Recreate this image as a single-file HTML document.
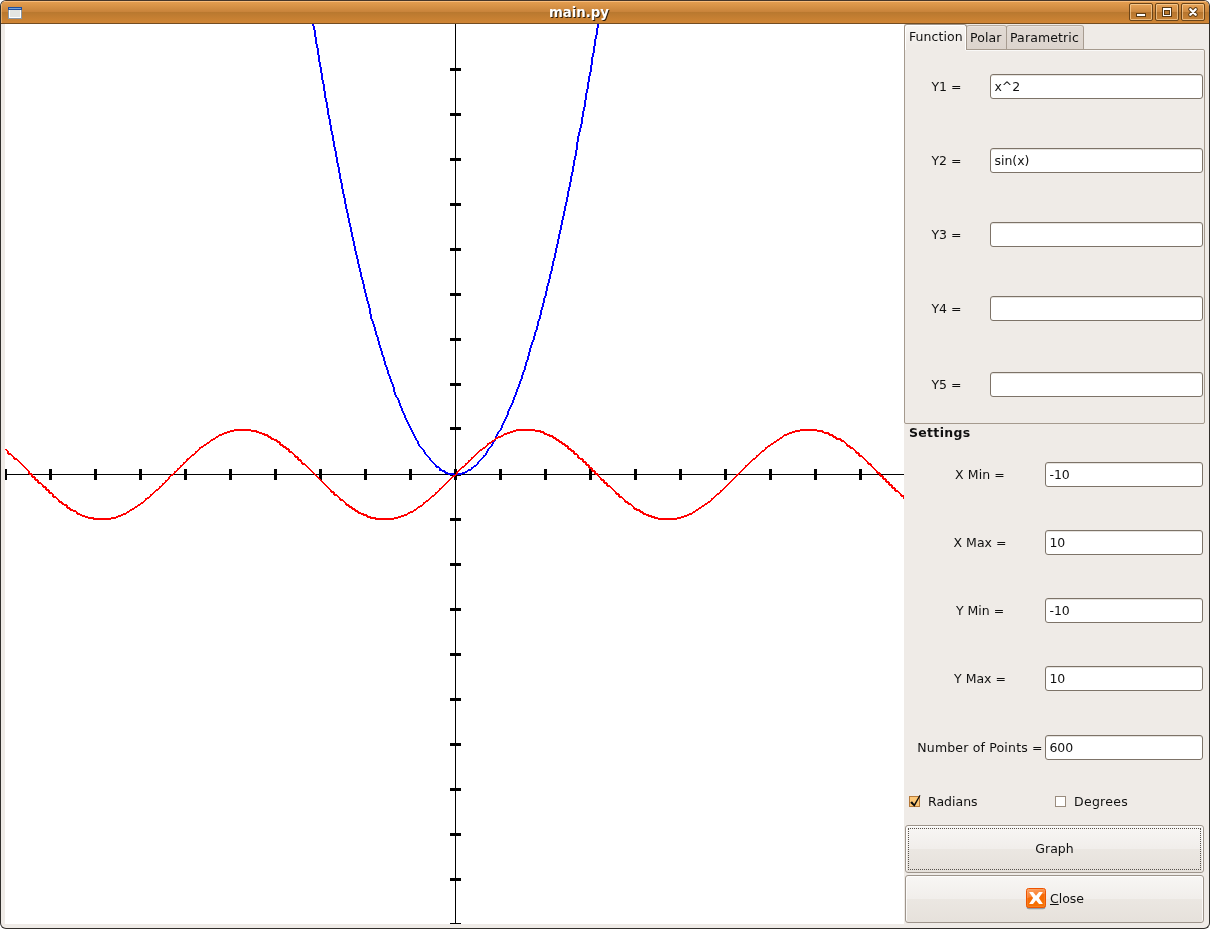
<!DOCTYPE html>
<html><head><meta charset="utf-8"><title>main.py</title>
<style>
html,body{margin:0;padding:0;}
body{width:1210px;height:929px;overflow:hidden;background:#fff;font-family:"DejaVu Sans","Liberation Sans",sans-serif;font-size:12.5px;color:#101010;}
#win{position:absolute;left:0;top:0;width:1210px;height:929px;box-sizing:border-box;border:1px solid #302e2b;border-top-color:#45362a;border-radius:6px 6px 6px 6px;background:#efebe7;overflow:hidden;}
#in{position:absolute;left:-1px;top:-1px;width:1210px;height:929px;will-change:transform;}
#tb{position:absolute;left:0;top:0;width:1210px;height:24px;
 background:linear-gradient(to bottom,#45362a 0,#45362a 1px,#f8bc7b 1px,#f8bc7b 2px,#e39d4f 2px,#c8833a 12px,#b8782f 12px,#d08535 23px,#734d22 23px,#734d22 24px);}
#tbl{position:absolute;left:1px;top:2px;width:1px;height:21px;background:rgba(255,210,150,.55);}
#title{position:absolute;left:0;top:1px;width:1158px;text-align:center;font-weight:bold;font-size:13.3px;line-height:24px;color:#fff;text-shadow:1px 1px 0 #2e1e0c;}
.abs{position:absolute;white-space:nowrap;line-height:16px;}
.c{text-align:center;}
#canvas{position:absolute;left:5px;top:24px;width:899px;height:900px;background:#fff;}
#canvas svg{display:block;}
.entry{position:absolute;box-sizing:border-box;height:25px;border:1px solid #7d7368;border-radius:3px;background:#fff;padding:0 0 0 3.4px;line-height:23px;white-space:nowrap;box-shadow:inset 0 1px 0 #e6e3df;}
.tab{position:absolute;box-sizing:border-box;border:1px solid #a79c91;border-top-color:#b5aa9e;border-bottom:none;border-radius:3px 3px 0 0;background:linear-gradient(to bottom,#e1dad4,#dcd4cd);box-shadow:inset 0 1px 0 #e9e4df;}
#nb{position:absolute;left:904px;top:49px;width:301px;height:375px;box-sizing:border-box;border:1px solid #a59a8e;border-radius:0 2px 2px 2px;background:#efebe7;box-shadow:inset 0 1px 0 #faf9f8;}
.btn{position:absolute;box-sizing:border-box;border:1px solid #9d948b;border-radius:3px;background:linear-gradient(to bottom,#f8f6f4 0,#f1eeeb 49%,#ebe7e2 50%,#e6e1db 100%);box-shadow:inset 1px 1px 0 rgba(255,255,255,.75),inset -1px 0 0 rgba(255,255,255,.75);text-align:center;}
.chk{position:absolute;box-sizing:border-box;width:11px;height:11px;border:1px solid #9a8c7e;background:#fff;}
.wb{position:absolute;top:3px;width:24px;height:18px;box-sizing:border-box;border:1px solid #6b4418;border-radius:2px;box-shadow:inset 0 0 0 1px rgba(255,220,170,.6);
 background:linear-gradient(to bottom,#e8a458 0,#cc8840 50%,#b5752e 50%,#c98336 100%);}
.wb svg{position:absolute;left:-1px;top:-1px;}
</style></head><body>
<div id="win"><div id="in">
 <div id="tb"></div><div id="tbl"></div>
 <svg class="abs" style="left:8px;top:7px;" width="14" height="12" viewBox="0 0 14 12" shape-rendering="crispEdges">
  <rect x="0" y="0" width="14" height="12" fill="#8b97a3"/>
  <rect x="0" y="0" width="14" height="3" fill="#1d4d9d"/>
  <rect x="1" y="1" width="12" height="1" fill="#78a3d8"/>
  <rect x="1" y="3" width="12" height="8" fill="#ffffff"/>
  <rect x="2" y="3" width="10" height="7" fill="#e3e5e1"/>
 </svg>
 <div id="title">main.py</div>
 <div class="wb" style="left:1129px;"><svg width="24" height="18" viewBox="0 0 24 18" shape-rendering="crispEdges"><rect x="7" y="10" width="10" height="4" fill="#5a3a14"/><rect x="8" y="11" width="8" height="2" fill="#fff"/></svg></div>
 <div class="wb" style="left:1155px;"><svg width="24" height="18" viewBox="0 0 24 18" shape-rendering="crispEdges"><rect x="7" y="4" width="10" height="10" fill="#5a3a14"/><rect x="8" y="5" width="8" height="8" fill="#fff"/><rect x="9" y="7" width="6" height="5" fill="#5a3a14"/><rect x="10" y="8" width="4" height="3" fill="#b8782f"/></svg></div>
 <div class="wb" style="left:1181px;"><svg width="24" height="18" viewBox="0 0 24 18"><path d="M9.3 6.3 L14.7 11.7 M14.7 6.3 L9.3 11.7" stroke="#5a3a14" stroke-width="4.2" stroke-linecap="round"/><path d="M9.3 6.3 L14.7 11.7 M14.7 6.3 L9.3 11.7" stroke="#fff" stroke-width="2.3" stroke-linecap="round"/></svg></div>

 <div id="canvas"><svg id="graph" width="899" height="900" viewBox="0 0 899 900" shape-rendering="crispEdges"><rect width="899" height="900" fill="#fff"/><rect x="0" y="450" width="899" height="1" fill="#000"/><rect x="450" y="0" width="1" height="900" fill="#000"/><rect x="-1" y="445" width="3" height="11" fill="#000"/><rect x="44" y="445" width="3" height="11" fill="#000"/><rect x="445" y="44" width="11" height="3" fill="#000"/><rect x="89" y="445" width="3" height="11" fill="#000"/><rect x="445" y="89" width="11" height="3" fill="#000"/><rect x="134" y="445" width="3" height="11" fill="#000"/><rect x="445" y="134" width="11" height="3" fill="#000"/><rect x="179" y="445" width="3" height="11" fill="#000"/><rect x="445" y="179" width="11" height="3" fill="#000"/><rect x="224" y="445" width="3" height="11" fill="#000"/><rect x="445" y="224" width="11" height="3" fill="#000"/><rect x="269" y="445" width="3" height="11" fill="#000"/><rect x="445" y="269" width="11" height="3" fill="#000"/><rect x="314" y="445" width="3" height="11" fill="#000"/><rect x="445" y="314" width="11" height="3" fill="#000"/><rect x="359" y="445" width="3" height="11" fill="#000"/><rect x="445" y="359" width="11" height="3" fill="#000"/><rect x="404" y="445" width="3" height="11" fill="#000"/><rect x="445" y="403" width="11" height="3" fill="#000"/><rect x="449" y="445" width="3" height="11" fill="#000"/><rect x="445" y="449" width="11" height="3" fill="#000"/><rect x="494" y="445" width="3" height="11" fill="#000"/><rect x="445" y="494" width="11" height="3" fill="#000"/><rect x="539" y="445" width="3" height="11" fill="#000"/><rect x="445" y="539" width="11" height="3" fill="#000"/><rect x="584" y="445" width="3" height="11" fill="#000"/><rect x="445" y="584" width="11" height="3" fill="#000"/><rect x="629" y="445" width="3" height="11" fill="#000"/><rect x="445" y="629" width="11" height="3" fill="#000"/><rect x="674" y="445" width="3" height="11" fill="#000"/><rect x="445" y="674" width="11" height="3" fill="#000"/><rect x="719" y="445" width="3" height="11" fill="#000"/><rect x="445" y="719" width="11" height="3" fill="#000"/><rect x="764" y="445" width="3" height="11" fill="#000"/><rect x="445" y="764" width="11" height="3" fill="#000"/><rect x="809" y="445" width="3" height="11" fill="#000"/><rect x="445" y="809" width="11" height="3" fill="#000"/><rect x="854" y="445" width="3" height="11" fill="#000"/><rect x="445" y="854" width="11" height="3" fill="#000"/><rect x="899" y="445" width="3" height="11" fill="#000"/><rect x="445" y="899" width="11" height="3" fill="#000"/><path fill="#0000ff" d="M307 0h2v1h-2zM592 0h2v1h-2zM307 1h2v1h-2zM592 1h2v1h-2zM308 2h2v1h-2zM592 2h2v1h-2zM308 3h2v1h-2zM592 3h2v1h-2zM308 4h2v1h-2zM591 4h2v1h-2zM308 5h2v1h-2zM591 5h2v1h-2zM309 6h2v1h-2zM591 6h2v1h-2zM309 7h2v1h-2zM591 7h2v1h-2zM309 8h2v1h-2zM591 8h2v1h-2zM309 9h2v1h-2zM591 9h2v1h-2zM309 10h2v1h-2zM591 10h2v1h-2zM309 11h2v1h-2zM590 11h2v1h-2zM309 12h2v1h-2zM590 12h2v1h-2zM310 13h2v1h-2zM590 13h2v1h-2zM310 14h2v1h-2zM590 14h2v1h-2zM310 15h2v1h-2zM589 15h2v1h-2zM310 16h2v1h-2zM589 16h2v1h-2zM310 17h2v1h-2zM589 17h2v1h-2zM310 18h2v1h-2zM589 18h2v1h-2zM310 19h2v1h-2zM589 19h2v1h-2zM311 20h2v1h-2zM589 20h2v1h-2zM311 21h2v1h-2zM589 21h2v1h-2zM311 22h2v1h-2zM588 22h2v1h-2zM311 23h2v1h-2zM588 23h2v1h-2zM312 24h2v1h-2zM588 24h2v1h-2zM312 25h2v1h-2zM588 25h2v1h-2zM312 26h2v1h-2zM588 26h2v1h-2zM312 27h2v1h-2zM588 27h2v1h-2zM312 28h2v1h-2zM588 28h2v1h-2zM312 29h2v1h-2zM587 29h2v1h-2zM312 30h2v1h-2zM587 30h2v1h-2zM313 31h2v1h-2zM587 31h2v1h-2zM313 32h2v1h-2zM587 32h2v1h-2zM313 33h2v1h-2zM586 33h2v1h-2zM313 34h2v1h-2zM586 34h2v1h-2zM313 35h2v1h-2zM586 35h2v1h-2zM313 36h2v1h-2zM586 36h2v1h-2zM313 37h2v1h-2zM586 37h2v1h-2zM314 38h2v1h-2zM586 38h2v1h-2zM314 39h2v1h-2zM586 39h2v1h-2zM314 40h2v1h-2zM586 40h2v1h-2zM314 41h2v1h-2zM585 41h2v1h-2zM314 42h2v1h-2zM585 42h2v1h-2zM315 43h2v1h-2zM585 43h2v1h-2zM315 44h2v1h-2zM585 44h2v1h-2zM315 45h2v1h-2zM585 45h2v1h-2zM315 46h2v1h-2zM585 46h2v1h-2zM315 47h2v1h-2zM585 47h2v1h-2zM315 48h2v1h-2zM584 48h2v1h-2zM316 49h2v1h-2zM584 49h2v1h-2zM316 50h2v1h-2zM584 50h2v1h-2zM316 51h2v1h-2zM584 51h2v1h-2zM316 52h2v1h-2zM583 52h2v1h-2zM316 53h2v1h-2zM583 53h2v1h-2zM316 54h2v1h-2zM583 54h2v1h-2zM316 55h2v1h-2zM583 55h2v1h-2zM317 56h2v1h-2zM583 56h2v1h-2zM317 57h2v1h-2zM583 57h2v1h-2zM317 58h2v1h-2zM582 58h2v1h-2zM317 59h2v1h-2zM582 59h2v1h-2zM318 60h2v1h-2zM582 60h2v1h-2zM318 61h2v1h-2zM582 61h2v1h-2zM318 62h2v1h-2zM582 62h2v1h-2zM318 63h2v1h-2zM582 63h2v1h-2zM318 64h2v1h-2zM582 64h2v1h-2zM318 65h2v1h-2zM581 65h2v1h-2zM318 66h2v1h-2zM581 66h2v1h-2zM319 67h2v1h-2zM581 67h2v1h-2zM319 68h2v1h-2zM581 68h2v1h-2zM319 69h2v1h-2zM580 69h2v1h-2zM319 70h2v1h-2zM580 70h2v1h-2zM319 71h2v1h-2zM580 71h2v1h-2zM319 72h2v1h-2zM580 72h2v1h-2zM319 73h2v1h-2zM580 73h2v1h-2zM320 74h2v1h-2zM580 74h2v1h-2zM320 75h2v1h-2zM580 75h2v1h-2zM320 76h2v1h-2zM579 76h2v1h-2zM320 77h2v1h-2zM579 77h2v1h-2zM321 78h2v1h-2zM579 78h2v1h-2zM321 79h2v1h-2zM579 79h2v1h-2zM321 80h2v1h-2zM579 80h2v1h-2zM321 81h2v1h-2zM579 81h2v1h-2zM321 82h2v1h-2zM579 82h2v1h-2zM321 83h2v1h-2zM578 83h2v1h-2zM322 84h2v1h-2zM578 84h2v1h-2zM322 85h2v1h-2zM578 85h2v1h-2zM322 86h2v1h-2zM578 86h2v1h-2zM322 87h2v1h-2zM577 87h2v1h-2zM322 88h2v1h-2zM577 88h2v1h-2zM322 89h2v1h-2zM577 89h2v1h-2zM322 90h2v1h-2zM577 90h2v1h-2zM323 91h2v1h-2zM577 91h2v1h-2zM323 92h2v1h-2zM577 92h2v1h-2zM323 93h2v1h-2zM576 93h2v1h-2zM323 94h2v1h-2zM576 94h2v1h-2zM324 95h2v1h-2zM576 95h2v1h-2zM324 96h2v1h-2zM576 96h2v1h-2zM324 97h2v1h-2zM576 97h2v1h-2zM324 98h2v1h-2zM576 98h2v1h-2zM324 99h2v1h-2zM576 99h2v1h-2zM324 100h2v1h-2zM575 100h2v1h-2zM325 101h2v1h-2zM575 101h2v1h-2zM325 102h2v1h-2zM575 102h2v1h-2zM325 103h2v1h-2zM575 103h2v1h-2zM325 104h2v1h-2zM574 104h2v1h-2zM325 105h2v1h-2zM574 105h2v1h-2zM325 106h2v1h-2zM574 106h2v1h-2zM326 107h2v1h-2zM574 107h2v1h-2zM326 108h2v1h-2zM573 108h2v1h-2zM326 109h2v1h-2zM573 109h2v1h-2zM326 110h2v1h-2zM573 110h2v1h-2zM327 111h2v1h-2zM573 111h2v1h-2zM327 112h2v1h-2zM572 112h2v1h-2zM327 113h2v1h-2zM572 113h2v1h-2zM327 114h2v1h-2zM572 114h2v1h-2zM327 115h2v1h-2zM572 115h2v1h-2zM327 116h2v1h-2zM572 116h2v1h-2zM328 117h2v1h-2zM572 117h2v1h-2zM328 118h2v1h-2zM571 118h2v1h-2zM328 119h2v1h-2zM571 119h2v1h-2zM328 120h2v1h-2zM571 120h2v1h-2zM328 121h2v1h-2zM571 121h2v1h-2zM328 122h2v1h-2zM571 122h2v1h-2zM329 123h2v1h-2zM571 123h2v1h-2zM329 124h2v1h-2zM571 124h2v1h-2zM329 125h2v1h-2zM571 125h2v1h-2zM329 126h2v1h-2zM570 126h2v1h-2zM330 127h2v1h-2zM570 127h2v1h-2zM330 128h2v1h-2zM570 128h2v1h-2zM330 129h2v1h-2zM570 129h2v1h-2zM330 130h2v1h-2zM570 130h2v1h-2zM330 131h2v1h-2zM570 131h2v1h-2zM330 132h2v1h-2zM569 132h2v1h-2zM331 133h2v1h-2zM569 133h2v1h-2zM331 134h2v1h-2zM569 134h2v1h-2zM331 135h2v1h-2zM569 135h2v1h-2zM331 136h2v1h-2zM568 136h2v1h-2zM331 137h2v1h-2zM568 137h2v1h-2zM331 138h2v1h-2zM568 138h2v1h-2zM332 139h2v1h-2zM568 139h2v1h-2zM332 140h2v1h-2zM568 140h2v1h-2zM332 141h2v1h-2zM568 141h2v1h-2zM332 142h2v1h-2zM567 142h2v1h-2zM333 143h2v1h-2zM567 143h2v1h-2zM333 144h2v1h-2zM567 144h2v1h-2zM333 145h2v1h-2zM567 145h2v1h-2zM333 146h2v1h-2zM567 146h2v1h-2zM333 147h2v1h-2zM567 147h2v1h-2zM333 148h2v1h-2zM566 148h2v1h-2zM334 149h2v1h-2zM566 149h2v1h-2zM334 150h2v1h-2zM566 150h2v1h-2zM334 151h2v1h-2zM566 151h2v1h-2zM334 152h2v1h-2zM565 152h2v1h-2zM334 153h2v1h-2zM565 153h2v1h-2zM334 154h2v1h-2zM565 154h2v1h-2zM335 155h2v1h-2zM565 155h2v1h-2zM335 156h2v1h-2zM565 156h2v1h-2zM335 157h2v1h-2zM565 157h2v1h-2zM335 158h2v1h-2zM564 158h2v1h-2zM336 159h2v1h-2zM564 159h2v1h-2zM336 160h2v1h-2zM564 160h2v1h-2zM336 161h2v1h-2zM564 161h2v1h-2zM336 162h2v1h-2zM564 162h2v1h-2zM336 163h2v1h-2zM563 163h2v1h-2zM336 164h2v1h-2zM563 164h2v1h-2zM337 165h2v1h-2zM563 165h2v1h-2zM337 166h2v1h-2zM563 166h2v1h-2zM337 167h2v1h-2zM562 167h2v1h-2zM337 168h2v1h-2zM562 168h2v1h-2zM337 169h2v1h-2zM562 169h2v1h-2zM338 170h2v1h-2zM562 170h2v1h-2zM338 171h2v1h-2zM562 171h2v1h-2zM338 172h2v1h-2zM562 172h2v1h-2zM338 173h2v1h-2zM561 173h2v1h-2zM339 174h2v1h-2zM561 174h2v1h-2zM339 175h2v1h-2zM561 175h2v1h-2zM339 176h2v1h-2zM561 176h2v1h-2zM339 177h2v1h-2zM561 177h2v1h-2zM339 178h2v1h-2zM560 178h2v1h-2zM339 179h2v1h-2zM560 179h2v1h-2zM340 180h2v1h-2zM560 180h2v1h-2zM340 181h2v1h-2zM560 181h2v1h-2zM340 182h2v1h-2zM559 182h2v1h-2zM340 183h2v1h-2zM559 183h2v1h-2zM340 184h2v1h-2zM559 184h2v1h-2zM341 185h2v1h-2zM559 185h2v1h-2zM341 186h2v1h-2zM559 186h2v1h-2zM341 187h2v1h-2zM558 187h2v1h-2zM341 188h2v1h-2zM558 188h2v1h-2zM342 189h2v1h-2zM558 189h2v1h-2zM342 190h2v1h-2zM558 190h2v1h-2zM342 191h2v1h-2zM558 191h2v1h-2zM342 192h2v1h-2zM557 192h2v1h-2zM342 193h2v1h-2zM557 193h2v1h-2zM343 194h2v1h-2zM557 194h2v1h-2zM343 195h2v1h-2zM557 195h2v1h-2zM343 196h2v1h-2zM556 196h2v1h-2zM343 197h2v1h-2zM556 197h2v1h-2zM343 198h2v1h-2zM556 198h2v1h-2zM344 199h2v1h-2zM556 199h2v1h-2zM344 200h2v1h-2zM556 200h2v1h-2zM344 201h2v1h-2zM555 201h2v1h-2zM344 202h2v1h-2zM555 202h2v1h-2zM345 203h2v1h-2zM555 203h2v1h-2zM345 204h2v1h-2zM555 204h2v1h-2zM345 205h2v1h-2zM555 205h2v1h-2zM345 206h2v1h-2zM554 206h2v1h-2zM345 207h2v1h-2zM554 207h2v1h-2zM346 208h2v1h-2zM554 208h2v1h-2zM346 209h2v1h-2zM554 209h2v1h-2zM346 210h2v1h-2zM553 210h2v1h-2zM346 211h2v1h-2zM553 211h2v1h-2zM346 212h2v1h-2zM553 212h2v1h-2zM347 213h2v1h-2zM553 213h2v1h-2zM347 214h2v1h-2zM553 214h2v1h-2zM347 215h2v1h-2zM552 215h2v1h-2zM347 216h2v1h-2zM552 216h2v1h-2zM348 217h2v1h-2zM552 217h2v1h-2zM348 218h2v1h-2zM552 218h2v1h-2zM348 219h2v1h-2zM552 219h2v1h-2zM348 220h2v1h-2zM551 220h2v1h-2zM348 221h2v1h-2zM551 221h2v1h-2zM349 222h2v1h-2zM551 222h2v1h-2zM349 223h2v1h-2zM551 223h2v1h-2zM349 224h2v1h-2zM550 224h2v1h-2zM349 225h2v1h-2zM550 225h2v1h-2zM349 226h2v1h-2zM550 226h2v1h-2zM350 227h2v1h-2zM550 227h2v1h-2zM350 228h2v1h-2zM550 228h2v1h-2zM350 229h2v1h-2zM549 229h2v1h-2zM350 230h2v1h-2zM549 230h2v1h-2zM351 231h2v1h-2zM549 231h2v1h-2zM351 232h2v1h-2zM549 232h2v1h-2zM351 233h2v1h-2zM549 233h2v1h-2zM351 234h2v1h-2zM548 234h2v1h-2zM352 235h2v1h-2zM548 235h2v1h-2zM352 236h2v1h-2zM548 236h2v1h-2zM352 237h2v1h-2zM547 237h2v1h-2zM352 238h2v1h-2zM547 238h2v1h-2zM352 239h2v1h-2zM547 239h2v1h-2zM353 240h2v1h-2zM547 240h2v1h-2zM353 241h2v1h-2zM547 241h2v1h-2zM353 242h2v1h-2zM546 242h2v1h-2zM353 243h2v1h-2zM546 243h2v1h-2zM354 244h2v1h-2zM546 244h2v1h-2zM354 245h2v1h-2zM546 245h2v1h-2zM354 246h2v1h-2zM546 246h2v1h-2zM354 247h2v1h-2zM545 247h2v1h-2zM355 248h2v1h-2zM545 248h2v1h-2zM355 249h2v1h-2zM545 249h2v1h-2zM355 250h2v1h-2zM544 250h2v1h-2zM355 251h2v1h-2zM544 251h2v1h-2zM355 252h2v1h-2zM544 252h2v1h-2zM356 253h2v1h-2zM544 253h2v1h-2zM356 254h2v1h-2zM544 254h2v1h-2zM356 255h2v1h-2zM543 255h2v1h-2zM357 256h2v1h-2zM543 256h2v1h-2zM357 257h2v1h-2zM543 257h2v1h-2zM357 258h2v1h-2zM543 258h2v1h-2zM357 259h2v1h-2zM542 259h2v1h-2zM358 260h2v1h-2zM542 260h2v1h-2zM358 261h2v1h-2zM542 261h2v1h-2zM358 262h2v1h-2zM541 262h2v1h-2zM358 263h2v1h-2zM541 263h2v1h-2zM358 264h2v1h-2zM541 264h2v1h-2zM359 265h2v1h-2zM541 265h2v1h-2zM359 266h2v1h-2zM541 266h2v1h-2zM359 267h2v1h-2zM540 267h2v1h-2zM359 268h2v1h-2zM540 268h2v1h-2zM360 269h2v1h-2zM540 269h2v1h-2zM360 270h2v1h-2zM540 270h2v1h-2zM360 271h2v1h-2zM540 271h2v1h-2zM360 272h2v1h-2zM539 272h2v1h-2zM361 273h2v1h-2zM539 273h2v1h-2zM361 274h2v1h-2zM538 274h2v1h-2zM361 275h2v1h-2zM538 275h2v1h-2zM361 276h2v1h-2zM538 276h2v1h-2zM362 277h2v1h-2zM538 277h2v1h-2zM362 278h2v1h-2zM538 278h2v1h-2zM362 279h2v1h-2zM537 279h2v1h-2zM363 280h2v1h-2zM537 280h2v1h-2zM363 281h2v1h-2zM537 281h2v1h-2zM363 282h2v1h-2zM537 282h2v1h-2zM363 283h2v1h-2zM536 283h2v1h-2zM364 284h2v1h-2zM536 284h2v1h-2zM364 285h2v1h-2zM536 285h2v1h-2zM364 286h2v1h-2zM535 286h2v1h-2zM364 287h2v1h-2zM535 287h2v1h-2zM364 288h2v1h-2zM535 288h2v1h-2zM364 289h2v1h-2zM535 289h2v1h-2zM365 290h2v1h-2zM535 290h2v1h-2zM365 291h2v1h-2zM534 291h2v1h-2zM365 292h2v1h-2zM534 292h2v1h-2zM365 293h2v1h-2zM534 293h2v1h-2zM365 294h2v1h-2zM534 294h2v1h-2zM366 295h2v1h-2zM533 295h2v1h-2zM366 296h2v1h-2zM533 296h2v1h-2zM367 297h2v1h-2zM532 297h2v1h-2zM367 298h2v1h-2zM532 298h2v1h-2zM367 299h2v1h-2zM532 299h2v1h-2zM368 300h2v1h-2zM532 300h2v1h-2zM368 301h2v1h-2zM532 301h2v1h-2zM368 302h2v1h-2zM531 302h2v1h-2zM369 303h2v1h-2zM531 303h2v1h-2zM369 304h2v1h-2zM531 304h2v1h-2zM369 305h2v1h-2zM531 305h2v1h-2zM369 306h2v1h-2zM530 306h2v1h-2zM370 307h2v1h-2zM530 307h2v1h-2zM370 308h2v1h-2zM529 308h2v1h-2zM370 309h2v1h-2zM529 309h2v1h-2zM370 310h2v1h-2zM529 310h2v1h-2zM371 311h2v1h-2zM529 311h2v1h-2zM371 312h2v1h-2zM528 312h2v1h-2zM372 313h2v1h-2zM528 313h2v1h-2zM372 314h2v1h-2zM528 314h2v1h-2zM372 315h2v1h-2zM528 315h2v1h-2zM372 316h2v1h-2zM527 316h2v1h-2zM373 317h2v1h-2zM527 317h2v1h-2zM373 318h2v1h-2zM526 318h2v1h-2zM373 319h2v1h-2zM526 319h2v1h-2zM373 320h2v1h-2zM526 320h2v1h-2zM374 321h2v1h-2zM525 321h2v1h-2zM374 322h2v1h-2zM525 322h2v1h-2zM374 323h2v1h-2zM525 323h2v1h-2zM375 324h2v1h-2zM524 324h2v1h-2zM375 325h2v1h-2zM524 325h2v1h-2zM375 326h2v1h-2zM524 326h2v1h-2zM376 327h2v1h-2zM524 327h2v1h-2zM376 328h2v1h-2zM523 328h2v1h-2zM376 329h2v1h-2zM523 329h2v1h-2zM376 330h2v1h-2zM523 330h2v1h-2zM377 331h2v1h-2zM523 331h2v1h-2zM377 332h2v1h-2zM522 332h2v1h-2zM378 333h2v1h-2zM522 333h2v1h-2zM378 334h2v1h-2zM522 334h2v1h-2zM378 335h2v1h-2zM522 335h2v1h-2zM378 336h2v1h-2zM521 336h2v1h-2zM379 337h2v1h-2zM521 337h2v1h-2zM379 338h2v1h-2zM520 338h2v1h-2zM379 339h2v1h-2zM520 339h2v1h-2zM379 340h2v1h-2zM520 340h2v1h-2zM380 341h2v1h-2zM520 341h2v1h-2zM380 342h2v1h-2zM519 342h2v1h-2zM381 343h2v1h-2zM519 343h2v1h-2zM381 344h2v1h-2zM519 344h2v1h-2zM381 345h2v1h-2zM519 345h2v1h-2zM382 346h2v1h-2zM518 346h2v1h-2zM382 347h2v1h-2zM518 347h2v1h-2zM382 348h2v1h-2zM517 348h2v1h-2zM382 349h2v1h-2zM517 349h2v1h-2zM383 350h2v1h-2zM517 350h2v1h-2zM383 351h2v1h-2zM516 351h2v1h-2zM384 352h2v1h-2zM516 352h2v1h-2zM384 353h2v1h-2zM516 353h2v1h-2zM384 354h2v1h-2zM516 354h2v1h-2zM385 355h2v1h-2zM515 355h2v1h-2zM385 356h2v1h-2zM515 356h2v1h-2zM385 357h2v1h-2zM514 357h2v1h-2zM386 358h2v1h-2zM514 358h2v1h-2zM386 359h2v1h-2zM514 359h2v1h-2zM387 360h2v1h-2zM513 360h2v1h-2zM387 361h2v1h-2zM513 361h2v1h-2zM387 362h2v1h-2zM513 362h2v1h-2zM388 363h2v1h-2zM512 363h2v1h-2zM388 364h2v1h-2zM512 364h2v1h-2zM388 365h2v1h-2zM511 365h2v1h-2zM388 366h2v1h-2zM511 366h2v1h-2zM388 367h2v1h-2zM511 367h2v1h-2zM389 368h2v1h-2zM510 368h2v1h-2zM389 369h2v1h-2zM510 369h2v1h-2zM389 370h2v1h-2zM510 370h2v1h-2zM390 371h2v1h-2zM509 371h2v1h-2zM390 372h2v1h-2zM509 372h2v1h-2zM391 373h2v1h-2zM508 373h2v1h-2zM392 374h2v1h-2zM508 374h2v1h-2zM392 375h2v1h-2zM508 375h2v1h-2zM393 376h2v1h-2zM507 376h2v1h-2zM393 377h2v1h-2zM507 377h2v1h-2zM393 378h2v1h-2zM507 378h2v1h-2zM394 379h2v1h-2zM506 379h2v1h-2zM394 380h2v1h-2zM506 380h2v1h-2zM394 381h2v1h-2zM505 381h2v1h-2zM395 382h2v1h-2zM505 382h2v1h-2zM395 383h2v1h-2zM504 383h2v1h-2zM396 384h2v1h-2zM504 384h2v1h-2zM396 385h2v1h-2zM503 385h2v1h-2zM396 386h2v1h-2zM503 386h2v1h-2zM397 387h2v1h-2zM502 387h2v1h-2zM397 388h2v1h-2zM502 388h2v1h-2zM398 389h2v1h-2zM502 389h2v1h-2zM398 390h2v1h-2zM502 390h2v1h-2zM399 391h2v1h-2zM501 391h2v1h-2zM399 392h2v1h-2zM501 392h2v1h-2zM399 393h2v1h-2zM500 393h2v1h-2zM400 394h2v1h-2zM500 394h2v1h-2zM400 395h2v1h-2zM499 395h2v1h-2zM401 396h2v1h-2zM499 396h2v1h-2zM401 397h2v1h-2zM498 397h2v1h-2zM402 398h2v1h-2zM498 398h2v1h-2zM402 399h2v1h-2zM497 399h2v1h-2zM403 400h2v1h-2zM497 400h2v1h-2zM403 401h2v1h-2zM496 401h2v1h-2zM404 402h2v1h-2zM496 402h2v1h-2zM404 403h2v1h-2zM496 403h2v1h-2zM405 404h2v1h-2zM495 404h2v1h-2zM405 405h2v1h-2zM495 405h2v1h-2zM406 406h2v1h-2zM494 406h2v1h-2zM406 407h2v1h-2zM493 407h2v1h-2zM407 408h2v1h-2zM492 408h2v1h-2zM407 409h2v1h-2zM492 409h2v1h-2zM408 410h2v1h-2zM491 410h2v1h-2zM408 411h2v1h-2zM491 411h2v1h-2zM409 412h2v1h-2zM490 412h2v1h-2zM409 413h2v1h-2zM490 413h2v1h-2zM410 414h2v1h-2zM490 414h2v1h-2zM410 415h2v1h-2zM489 415h2v1h-2zM411 416h2v1h-2zM489 416h2v1h-2zM412 417h2v1h-2zM488 417h2v1h-2zM412 418h2v1h-2zM487 418h2v1h-2zM412 419h2v1h-2zM487 419h2v1h-2zM413 420h2v1h-2zM486 420h2v1h-2zM413 421h2v1h-2zM486 421h2v1h-2zM414 422h2v1h-2zM485 422h2v1h-2zM415 423h2v1h-2zM484 423h2v1h-2zM416 424h2v1h-2zM483 424h2v1h-2zM417 425h2v1h-2zM482 425h2v1h-2zM418 426h2v1h-2zM482 426h2v1h-2zM418 427h2v1h-2zM481 427h2v1h-2zM419 428h2v1h-2zM481 428h2v1h-2zM419 429h2v1h-2zM480 429h2v1h-2zM420 430h2v1h-2zM480 430h2v1h-2zM421 431h2v1h-2zM478 431h3v1h-3zM422 432h2v1h-2zM478 432h2v1h-2zM423 433h2v1h-2zM477 433h2v1h-2zM424 434h2v1h-2zM476 434h2v1h-2zM424 435h2v1h-2zM475 435h2v1h-2zM425 436h2v1h-2zM474 436h2v1h-2zM426 437h2v1h-2zM473 437h2v1h-2zM427 438h2v1h-2zM472 438h2v1h-2zM428 439h2v1h-2zM472 439h2v1h-2zM429 440h2v1h-2zM471 440h2v1h-2zM430 441h2v1h-2zM469 441h3v1h-3zM430 442h4v1h-4zM468 442h3v1h-3zM431 443h4v1h-4zM466 443h3v1h-3zM434 444h2v1h-2zM466 444h2v1h-2zM434 445h3v1h-3zM463 445h4v1h-4zM434 446h6v1h-6zM462 446h4v1h-4zM437 447h4v1h-4zM460 447h3v1h-3zM439 448h4v1h-4zM457 448h5v1h-5zM440 449h9v1h-9zM451 449h9v1h-9zM443 450h14v1h-14zM449 451h2v1h-2z"/><path fill="#ff0000" d="M229 405h17v1h-17zM511 405h19v1h-19zM795 405h17v1h-17zM225 406h27v1h-27zM508 406h28v1h-28zM790 406h28v1h-28zM222 407h7v1h-7zM246 407h8v1h-8zM505 407h6v1h-6zM530 407h9v1h-9zM787 407h8v1h-8zM812 407h7v1h-7zM219 408h6v1h-6zM251 408h6v1h-6zM502 408h6v1h-6zM535 408h5v1h-5zM784 408h6v1h-6zM817 408h7v1h-7zM217 409h5v1h-5zM254 409h6v1h-6zM499 409h6v1h-6zM538 409h4v1h-4zM782 409h5v1h-5zM819 409h6v1h-6zM214 410h5v1h-5zM257 410h6v1h-6zM498 410h4v1h-4zM539 410h6v1h-6zM779 410h5v1h-5zM823 410h5v1h-5zM213 411h4v1h-4zM259 411h5v1h-5zM496 411h3v1h-3zM542 411h6v1h-6zM778 411h4v1h-4zM824 411h5v1h-5zM211 412h3v1h-3zM262 412h4v1h-4zM493 412h5v1h-5zM544 412h5v1h-5zM777 412h2v1h-2zM827 412h4v1h-4zM210 413h3v1h-3zM263 413h4v1h-4zM491 413h5v1h-5zM547 413h4v1h-4zM775 413h3v1h-3zM828 413h4v1h-4zM208 414h3v1h-3zM265 414h4v1h-4zM490 414h3v1h-3zM548 414h4v1h-4zM774 414h3v1h-3zM830 414h6v1h-6zM206 415h4v1h-4zM266 415h6v1h-6zM489 415h2v1h-2zM550 415h4v1h-4zM772 415h3v1h-3zM831 415h6v1h-6zM205 416h3v1h-3zM269 416h4v1h-4zM487 416h3v1h-3zM551 416h4v1h-4zM771 416h3v1h-3zM835 416h4v1h-4zM204 417h2v1h-2zM271 417h4v1h-4zM486 417h3v1h-3zM553 417h4v1h-4zM769 417h3v1h-3zM836 417h4v1h-4zM202 418h3v1h-3zM272 418h4v1h-4zM484 418h3v1h-3zM554 418h4v1h-4zM768 418h3v1h-3zM839 418h2v1h-2zM201 419h3v1h-3zM274 419h2v1h-2zM482 419h4v1h-4zM556 419h4v1h-4zM766 419h3v1h-3zM840 419h2v1h-2zM199 420h3v1h-3zM274 420h4v1h-4zM482 420h2v1h-2zM557 420h4v1h-4zM765 420h3v1h-3zM841 420h2v1h-2zM198 421h3v1h-3zM275 421h4v1h-4zM481 421h2v1h-2zM559 421h4v1h-4zM763 421h3v1h-3zM841 421h4v1h-4zM196 422h3v1h-3zM277 422h4v1h-4zM480 422h2v1h-2zM560 422h4v1h-4zM762 422h3v1h-3zM842 422h4v1h-4zM194 423h4v1h-4zM278 423h4v1h-4zM478 423h3v1h-3zM562 423h2v1h-2zM760 423h3v1h-3zM844 423h4v1h-4zM194 424h2v1h-2zM280 424h4v1h-4zM477 424h3v1h-3zM562 424h4v1h-4zM760 424h2v1h-2zM845 424h4v1h-4zM0 425h2v1h-2zM193 425h2v1h-2zM281 425h4v1h-4zM475 425h3v1h-3zM563 425h4v1h-4zM759 425h2v1h-2zM848 425h2v1h-2zM1 426h2v1h-2zM192 426h2v1h-2zM283 426h2v1h-2zM474 426h3v1h-3zM565 426h4v1h-4zM757 426h3v1h-3zM849 426h2v1h-2zM2 427h2v1h-2zM190 427h3v1h-3zM283 427h4v1h-4zM473 427h2v1h-2zM566 427h4v1h-4zM756 427h3v1h-3zM850 427h2v1h-2zM2 428h2v1h-2zM190 428h2v1h-2zM284 428h4v1h-4zM472 428h2v1h-2zM568 428h2v1h-2zM755 428h2v1h-2zM850 428h4v1h-4zM2 429h4v1h-4zM189 429h2v1h-2zM287 429h2v1h-2zM471 429h2v1h-2zM568 429h4v1h-4zM754 429h2v1h-2zM851 429h4v1h-4zM3 430h4v1h-4zM187 430h3v1h-3zM288 430h2v1h-2zM470 430h2v1h-2zM569 430h4v1h-4zM753 430h2v1h-2zM853 430h2v1h-2zM6 431h2v1h-2zM186 431h3v1h-3zM289 431h2v1h-2zM469 431h2v1h-2zM572 431h2v1h-2zM751 431h3v1h-3zM853 431h4v1h-4zM7 432h2v1h-2zM185 432h2v1h-2zM289 432h4v1h-4zM468 432h2v1h-2zM572 432h2v1h-2zM751 432h2v1h-2zM854 432h4v1h-4zM8 433h2v1h-2zM184 433h2v1h-2zM290 433h4v1h-4zM466 433h3v1h-3zM572 433h3v1h-3zM750 433h2v1h-2zM857 433h2v1h-2zM8 434h4v1h-4zM182 434h3v1h-3zM292 434h2v1h-2zM466 434h2v1h-2zM573 434h5v1h-5zM748 434h3v1h-3zM858 434h2v1h-2zM9 435h4v1h-4zM181 435h3v1h-3zM292 435h4v1h-4zM465 435h2v1h-2zM575 435h4v1h-4zM747 435h3v1h-3zM859 435h2v1h-2zM12 436h2v1h-2zM181 436h2v1h-2zM293 436h4v1h-4zM463 436h3v1h-3zM577 436h2v1h-2zM746 436h2v1h-2zM860 436h2v1h-2zM13 437h2v1h-2zM180 437h2v1h-2zM295 437h2v1h-2zM463 437h2v1h-2zM577 437h4v1h-4zM745 437h2v1h-2zM861 437h2v1h-2zM14 438h2v1h-2zM178 438h3v1h-3zM296 438h2v1h-2zM462 438h2v1h-2zM578 438h4v1h-4zM744 438h2v1h-2zM862 438h2v1h-2zM15 439h2v1h-2zM178 439h2v1h-2zM296 439h4v1h-4zM460 439h3v1h-3zM580 439h2v1h-2zM743 439h2v1h-2zM862 439h4v1h-4zM16 440h2v1h-2zM177 440h2v1h-2zM297 440h4v1h-4zM460 440h2v1h-2zM580 440h4v1h-4zM742 440h2v1h-2zM863 440h4v1h-4zM17 441h2v1h-2zM175 441h3v1h-3zM300 441h2v1h-2zM459 441h2v1h-2zM581 441h4v1h-4zM740 441h3v1h-3zM865 441h2v1h-2zM18 442h2v1h-2zM175 442h2v1h-2zM301 442h2v1h-2zM457 442h3v1h-3zM583 442h2v1h-2zM740 442h2v1h-2zM866 442h2v1h-2zM19 443h2v1h-2zM174 443h2v1h-2zM302 443h2v1h-2zM456 443h3v1h-3zM583 443h4v1h-4zM739 443h2v1h-2zM867 443h2v1h-2zM20 444h2v1h-2zM172 444h3v1h-3zM303 444h2v1h-2zM455 444h2v1h-2zM584 444h4v1h-4zM738 444h2v1h-2zM868 444h2v1h-2zM21 445h2v1h-2zM172 445h2v1h-2zM304 445h2v1h-2zM454 445h2v1h-2zM586 445h2v1h-2zM737 445h2v1h-2zM869 445h2v1h-2zM22 446h2v1h-2zM171 446h2v1h-2zM305 446h2v1h-2zM453 446h2v1h-2zM586 446h4v1h-4zM736 446h2v1h-2zM870 446h2v1h-2zM23 447h2v1h-2zM169 447h3v1h-3zM306 447h2v1h-2zM452 447h2v1h-2zM587 447h4v1h-4zM735 447h2v1h-2zM871 447h2v1h-2zM23 448h2v1h-2zM169 448h2v1h-2zM307 448h2v1h-2zM451 448h2v1h-2zM589 448h2v1h-2zM734 448h2v1h-2zM871 448h4v1h-4zM23 449h4v1h-4zM168 449h2v1h-2zM308 449h2v1h-2zM451 449h2v1h-2zM589 449h4v1h-4zM733 449h2v1h-2zM872 449h4v1h-4zM24 450h4v1h-4zM166 450h3v1h-3zM309 450h2v1h-2zM450 450h2v1h-2zM590 450h4v1h-4zM731 450h3v1h-3zM874 450h2v1h-2zM26 451h2v1h-2zM165 451h3v1h-3zM310 451h2v1h-2zM448 451h3v1h-3zM592 451h2v1h-2zM731 451h2v1h-2zM874 451h4v1h-4zM26 452h4v1h-4zM164 452h2v1h-2zM311 452h2v1h-2zM447 452h3v1h-3zM593 452h2v1h-2zM730 452h2v1h-2zM875 452h4v1h-4zM27 453h4v1h-4zM163 453h2v1h-2zM312 453h2v1h-2zM446 453h2v1h-2zM594 453h2v1h-2zM729 453h2v1h-2zM877 453h2v1h-2zM29 454h2v1h-2zM163 454h2v1h-2zM313 454h2v1h-2zM445 454h2v1h-2zM595 454h2v1h-2zM728 454h2v1h-2zM877 454h4v1h-4zM29 455h4v1h-4zM162 455h2v1h-2zM314 455h2v1h-2zM444 455h2v1h-2zM595 455h4v1h-4zM727 455h2v1h-2zM878 455h4v1h-4zM30 456h4v1h-4zM160 456h3v1h-3zM315 456h2v1h-2zM443 456h2v1h-2zM596 456h4v1h-4zM726 456h2v1h-2zM880 456h2v1h-2zM32 457h2v1h-2zM160 457h2v1h-2zM316 457h2v1h-2zM442 457h2v1h-2zM598 457h2v1h-2zM725 457h2v1h-2zM880 457h4v1h-4zM32 458h4v1h-4zM159 458h2v1h-2zM317 458h2v1h-2zM441 458h2v1h-2zM598 458h4v1h-4zM724 458h2v1h-2zM881 458h4v1h-4zM33 459h4v1h-4zM157 459h3v1h-3zM318 459h2v1h-2zM440 459h2v1h-2zM599 459h4v1h-4zM723 459h2v1h-2zM883 459h2v1h-2zM36 460h2v1h-2zM157 460h2v1h-2zM319 460h2v1h-2zM439 460h2v1h-2zM601 460h2v1h-2zM722 460h2v1h-2zM883 460h4v1h-4zM37 461h2v1h-2zM156 461h2v1h-2zM320 461h2v1h-2zM438 461h2v1h-2zM601 461h4v1h-4zM721 461h2v1h-2zM884 461h4v1h-4zM37 462h4v1h-4zM154 462h3v1h-3zM321 462h2v1h-2zM437 462h2v1h-2zM602 462h4v1h-4zM720 462h2v1h-2zM886 462h2v1h-2zM38 463h4v1h-4zM154 463h2v1h-2zM322 463h2v1h-2zM436 463h2v1h-2zM605 463h2v1h-2zM719 463h2v1h-2zM886 463h4v1h-4zM40 464h2v1h-2zM153 464h2v1h-2zM323 464h2v1h-2zM434 464h3v1h-3zM606 464h2v1h-2zM718 464h2v1h-2zM887 464h4v1h-4zM40 465h4v1h-4zM151 465h3v1h-3zM324 465h2v1h-2zM434 465h2v1h-2zM607 465h2v1h-2zM717 465h2v1h-2zM889 465h2v1h-2zM41 466h4v1h-4zM150 466h3v1h-3zM325 466h2v1h-2zM433 466h2v1h-2zM608 466h2v1h-2zM715 466h3v1h-3zM889 466h4v1h-4zM43 467h2v1h-2zM149 467h2v1h-2zM325 467h4v1h-4zM432 467h2v1h-2zM609 467h2v1h-2zM715 467h2v1h-2zM890 467h4v1h-4zM43 468h4v1h-4zM148 468h2v1h-2zM326 468h4v1h-4zM430 468h3v1h-3zM610 468h2v1h-2zM714 468h2v1h-2zM893 468h2v1h-2zM44 469h4v1h-4zM147 469h2v1h-2zM328 469h2v1h-2zM430 469h2v1h-2zM610 469h4v1h-4zM712 469h3v1h-3zM894 469h2v1h-2zM47 470h2v1h-2zM145 470h3v1h-3zM328 470h4v1h-4zM429 470h2v1h-2zM611 470h4v1h-4zM711 470h3v1h-3zM895 470h2v1h-2zM47 471h2v1h-2zM145 471h2v1h-2zM329 471h4v1h-4zM427 471h3v1h-3zM613 471h2v1h-2zM710 471h2v1h-2zM895 471h4v1h-4zM47 472h4v1h-4zM144 472h2v1h-2zM332 472h2v1h-2zM426 472h3v1h-3zM613 472h4v1h-4zM709 472h2v1h-2zM896 472h3v1h-3zM48 473h4v1h-4zM142 473h3v1h-3zM333 473h2v1h-2zM425 473h2v1h-2zM614 473h4v1h-4zM708 473h2v1h-2zM898 473h1v1h-1zM51 474h2v1h-2zM140 474h4v1h-4zM334 474h2v1h-2zM424 474h2v1h-2zM617 474h2v1h-2zM706 474h3v1h-3zM898 474h1v1h-1zM52 475h2v1h-2zM140 475h2v1h-2zM334 475h4v1h-4zM423 475h2v1h-2zM618 475h2v1h-2zM706 475h2v1h-2zM53 476h2v1h-2zM139 476h2v1h-2zM335 476h4v1h-4zM421 476h3v1h-3zM619 476h2v1h-2zM705 476h2v1h-2zM53 477h4v1h-4zM138 477h2v1h-2zM338 477h2v1h-2zM420 477h3v1h-3zM619 477h4v1h-4zM703 477h3v1h-3zM54 478h4v1h-4zM136 478h3v1h-3zM339 478h2v1h-2zM418 478h3v1h-3zM620 478h4v1h-4zM702 478h3v1h-3zM56 479h3v1h-3zM135 479h3v1h-3zM340 479h2v1h-2zM418 479h2v1h-2zM622 479h4v1h-4zM700 479h3v1h-3zM57 480h5v1h-5zM133 480h3v1h-3zM340 480h4v1h-4zM417 480h2v1h-2zM623 480h4v1h-4zM699 480h3v1h-3zM59 481h4v1h-4zM132 481h3v1h-3zM341 481h4v1h-4zM415 481h3v1h-3zM626 481h2v1h-2zM697 481h3v1h-3zM61 482h2v1h-2zM130 482h3v1h-3zM343 482h4v1h-4zM413 482h4v1h-4zM627 482h2v1h-2zM696 482h3v1h-3zM61 483h4v1h-4zM129 483h3v1h-3zM344 483h4v1h-4zM412 483h3v1h-3zM628 483h2v1h-2zM694 483h3v1h-3zM62 484h4v1h-4zM127 484h3v1h-3zM346 484h4v1h-4zM411 484h2v1h-2zM628 484h4v1h-4zM693 484h3v1h-3zM64 485h4v1h-4zM125 485h4v1h-4zM347 485h4v1h-4zM409 485h3v1h-3zM629 485h6v1h-6zM691 485h3v1h-3zM65 486h6v1h-6zM124 486h3v1h-3zM349 486h4v1h-4zM408 486h3v1h-3zM631 486h5v1h-5zM690 486h3v1h-3zM68 487h4v1h-4zM122 487h3v1h-3zM350 487h4v1h-4zM405 487h4v1h-4zM634 487h4v1h-4zM688 487h3v1h-3zM71 488h2v1h-2zM121 488h3v1h-3zM352 488h4v1h-4zM403 488h5v1h-5zM635 488h4v1h-4zM687 488h3v1h-3zM71 489h4v1h-4zM118 489h4v1h-4zM353 489h6v1h-6zM402 489h3v1h-3zM637 489h4v1h-4zM684 489h4v1h-4zM72 490h5v1h-5zM116 490h5v1h-5zM356 490h6v1h-6zM399 490h4v1h-4zM638 490h6v1h-6zM682 490h5v1h-5zM75 491h5v1h-5zM113 491h5v1h-5zM358 491h5v1h-5zM396 491h6v1h-6zM641 491h6v1h-6zM679 491h5v1h-5zM77 492h6v1h-6zM111 492h5v1h-5zM361 492h5v1h-5zM393 492h6v1h-6zM643 492h7v1h-7zM676 492h6v1h-6zM80 493h9v1h-9zM106 493h7v1h-7zM362 493h9v1h-9zM389 493h7v1h-7zM646 493h7v1h-7zM672 493h7v1h-7zM83 494h28v1h-28zM365 494h28v1h-28zM649 494h27v1h-27zM88 495h18v1h-18zM370 495h19v1h-19zM653 495h19v1h-19z"/></svg></div>
 <div id="nb"></div>
 <div class="tab" style="left:1006px;top:25px;width:78px;height:24px;"></div>
 <div class="tab" style="left:966px;top:25px;width:41px;height:24px;"></div>
 <div class="tab" style="left:904px;top:24px;width:63px;height:26px;background:linear-gradient(to bottom,#f8f6f4,#efebe7 80%);border-color:#a0958a;box-shadow:inset 1px 1px 0 #fff,inset -1px 0 0 #fff;"></div>
 <div class="abs" style="left:905px;top:50px;width:61px;height:1px;background:#efebe7;"></div>
 <div class="abs" style="left:909px;top:29px;letter-spacing:.08px;">Function</div>
 <div class="abs" style="left:970px;top:30px;letter-spacing:.12px;">Polar</div>
 <div class="abs" style="left:1010px;top:30px;letter-spacing:.12px;">Parametric</div>

 <div class="abs c" style="left:906px;width:81px;top:79px;">Y1 =</div>
 <div class="abs c" style="left:906px;width:81px;top:153px;">Y2 =</div>
 <div class="abs c" style="left:906px;width:81px;top:227px;">Y3 =</div>
 <div class="abs c" style="left:906px;width:81px;top:301px;">Y4 =</div>
 <div class="abs c" style="left:906px;width:81px;top:377px;">Y5 =</div>
 <div class="entry" style="left:990px;top:74px;width:213px;">x^2</div>
 <div class="entry" style="left:990px;top:148px;width:213px;">sin(x)</div>
 <div class="entry" style="left:990px;top:222px;width:213px;"></div>
 <div class="entry" style="left:990px;top:296px;width:213px;"></div>
 <div class="entry" style="left:990px;top:372px;width:213px;"></div>

 <div class="abs" style="left:909px;top:425px;font-weight:bold;letter-spacing:.3px;">Settings</div>
 <div class="abs c" style="left:916px;width:128px;top:467px;letter-spacing:.1px;">X Min =</div>
 <div class="abs c" style="left:916px;width:128px;top:535px;">X Max =</div>
 <div class="abs c" style="left:916px;width:128px;top:603px;">Y Min =</div>
 <div class="abs c" style="left:916px;width:128px;top:671px;">Y Max =</div>
 <div class="abs c" style="left:916px;width:128px;top:740px;letter-spacing:.18px;">Number of Points =</div>
 <div class="entry" style="left:1045px;top:462px;width:158px;">-10</div>
 <div class="entry" style="left:1045px;top:530px;width:158px;">10</div>
 <div class="entry" style="left:1045px;top:598px;width:158px;">-10</div>
 <div class="entry" style="left:1045px;top:666px;width:158px;">10</div>
 <div class="entry" style="left:1045px;top:735px;width:158px;">600</div>

 <div class="chk" style="left:909px;top:796px;border-color:#b5793a;background:#fdc878;"></div>
 <svg class="abs" style="left:908px;top:792px;" width="16" height="16" viewBox="0 0 16 16"><path d="M2.2 10.7 L4.0 9.2 L6.2 11.9 L11.6 3.0 L12.5 3.5 L6.5 14.8 Z" fill="#0a0a0a"/></svg>
 <div class="abs" style="left:928px;top:794px;">Radians</div>
 <div class="chk" style="left:1055px;top:796px;"></div>
 <div class="abs" style="left:1074px;top:794px;letter-spacing:.28px;">Degrees</div>

 <div class="btn" style="left:905px;top:825px;width:299px;height:48px;"></div>
 <div class="abs" style="left:908px;top:828px;width:291px;height:40px;border:1px dotted #55504a;"></div>
 <div class="abs c" style="left:905px;width:299px;top:841px;">Graph</div>
 <div class="btn" style="left:905px;top:875px;width:299px;height:48px;"></div>
 <svg class="abs" style="left:1025px;top:887px;" width="22" height="23" viewBox="-1 -1 22 23">
  <defs><linearGradient id="cg" x1="0" y1="0" x2="0.25" y2="1"><stop offset="0" stop-color="#fca469"/><stop offset="0.46" stop-color="#f98233"/><stop offset="0.5" stop-color="#f76a05"/><stop offset="1" stop-color="#f57204"/></linearGradient></defs>
  <rect x="0.5" y="2" width="19" height="19.2" rx="2.5" fill="rgba(60,90,105,.5)"/>
  <rect x="1.5" y="-0.5" width="17" height="2" fill="rgba(240,248,252,.6)"/>
  <rect x="0.5" y="0.5" width="19" height="19" rx="2" fill="url(#cg)" stroke="#ee5300"/>
  <rect x="1.5" y="1.5" width="17" height="17" rx="1.2" fill="none" stroke="rgba(255,200,150,.18)"/>
  <path d="M3.1 4 H7 L10 7.7 L13 4 H16.9 L12.9 10 L16.9 16 H13 L10 12.3 L7 16 H3.1 L7.1 10 Z" fill="#fff"/>
 </svg>
 <div class="abs" style="left:1050px;top:891px;"><u>C</u>lose</div>
</div></div>
</body></html>
